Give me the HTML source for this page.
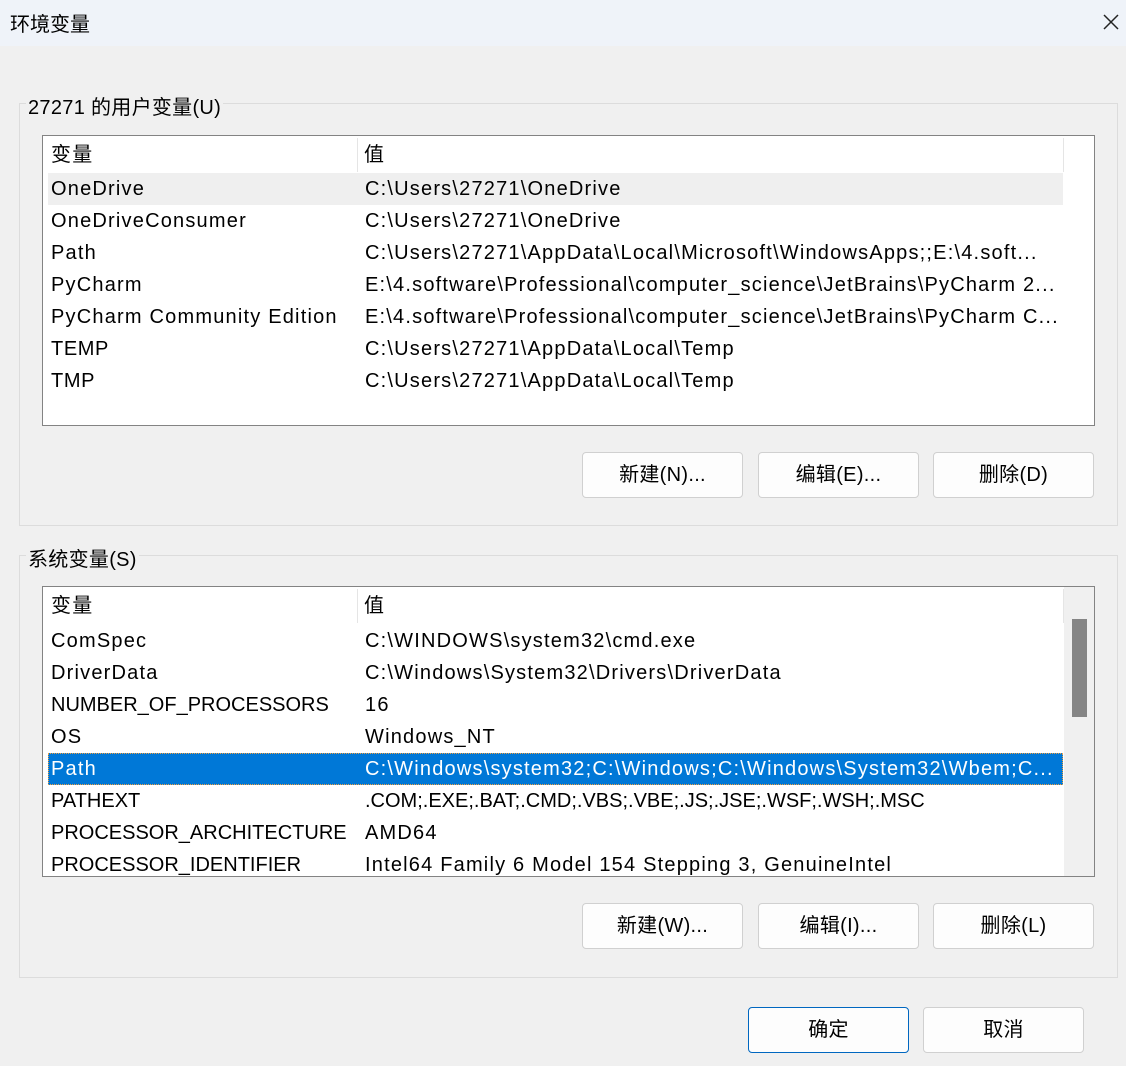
<!DOCTYPE html>
<html><head><meta charset="utf-8"><style>
*{margin:0;padding:0;box-sizing:border-box}
body{width:1126px;height:1066px;background:#f0f0f0;position:relative;overflow:hidden;font-family:"Liberation Sans","Noto Sans CJK SC",sans-serif;font-size:20px;color:#000;letter-spacing:1.2px}
.abs{position:absolute}
.title{left:0;top:0;width:1126px;height:46px;background:#eff3f9}
.title span{position:absolute;left:10px;top:8px;font-size:20px;letter-spacing:0}
.group{border:1px solid #dcdcdc}
.legend{background:#f0f0f0;padding:0 2px;white-space:nowrap}
.list{background:#fff;border:1px solid #838383;overflow:hidden}
.row{position:absolute;left:8px;height:32px;line-height:33px;white-space:nowrap}
.row .k{position:absolute;left:0}
.row .v{position:absolute;left:314px;width:700px;overflow:hidden}
.u{letter-spacing:0}
.btn{background:#fdfdfd;border:1px solid #d0d0d0;border-radius:4px;text-align:center;line-height:44px;height:46px;width:161px;letter-spacing:0.3px}
</style></head><body>
<div class="abs title"><span>环境变量</span>
<svg class="abs" style="left:1102px;top:13px" width="18" height="18" viewBox="0 0 18 18"><path d="M2 2L16 16M16 2L2 16" stroke="#222" stroke-width="1.5"/></svg></div>

<div class="abs group" style="left:19px;top:103px;width:1099px;height:423px"></div>
<div class="abs legend" style="left:26px;top:91px;letter-spacing:0.3px">27271 的用户变量(U)</div>
<div class="abs list" style="left:42px;top:135px;width:1053px;height:291px">
 <div class="abs" style="left:314px;top:2px;width:1px;height:34px;background:#e5e5e5"></div>
 <div class="abs" style="left:1020px;top:2px;width:1px;height:34px;background:#e5e5e5"></div>
 <div class="row" style="top:3px"><span class="k">变量</span><span class="v" style="left:313px">值</span></div>
 <div class="abs" style="left:5px;top:37px;width:1015px;height:32px;background:#efefef"></div>
 <div class="row" style="top:37px"><span class="k">OneDrive</span><span class="v">C:\Users\27271\OneDrive</span></div>
 <div class="row" style="top:69px"><span class="k">OneDriveConsumer</span><span class="v">C:\Users\27271\OneDrive</span></div>
 <div class="row" style="top:101px"><span class="k">Path</span><span class="v">C:\Users\27271\AppData\Local\Microsoft\WindowsApps;;E:\4.soft...</span></div>
 <div class="row" style="top:133px"><span class="k">PyCharm</span><span class="v">E:\4.software\Professional\computer_science\JetBrains\PyCharm 2...</span></div>
 <div class="row" style="top:165px"><span class="k">PyCharm Community Edition</span><span class="v">E:\4.software\Professional\computer_science\JetBrains\PyCharm C...</span></div>
 <div class="row" style="top:197px"><span class="k u" style="letter-spacing:0.6px">TEMP</span><span class="v">C:\Users\27271\AppData\Local\Temp</span></div>
 <div class="row" style="top:229px"><span class="k u" style="letter-spacing:0.6px">TMP</span><span class="v">C:\Users\27271\AppData\Local\Temp</span></div>
</div>
<div class="abs btn" style="left:582px;top:452px">新建(N)...</div>
<div class="abs btn" style="left:758px;top:452px">编辑(E)...</div>
<div class="abs btn" style="left:933px;top:452px">删除(D)</div>

<div class="abs group" style="left:19px;top:555px;width:1099px;height:423px"></div>
<div class="abs legend" style="left:26px;top:543px;letter-spacing:0.3px">系统变量(S)</div>
<div class="abs list" style="left:42px;top:586px;width:1053px;height:291px">
 <div class="abs" style="left:314px;top:2px;width:1px;height:34px;background:#e5e5e5"></div>
 <div class="abs" style="left:1020px;top:2px;width:1px;height:34px;background:#e5e5e5"></div>
 <div class="abs" style="left:1021px;top:0;width:31px;height:291px;background:#f0f0f0"></div>
 <div class="abs" style="left:1029px;top:32px;width:15px;height:98px;background:#858585"></div>
 <div class="row" style="top:3px"><span class="k">变量</span><span class="v" style="left:313px">值</span></div>
 <div class="row" style="top:38px"><span class="k">ComSpec</span><span class="v">C:\WINDOWS\system32\cmd.exe</span></div>
 <div class="row" style="top:70px"><span class="k">DriverData</span><span class="v">C:\Windows\System32\Drivers\DriverData</span></div>
 <div class="row" style="top:102px"><span class="k u">NUMBER_OF_PROCESSORS</span><span class="v">16</span></div>
 <div class="row" style="top:134px"><span class="k">OS</span><span class="v">Windows_NT</span></div>
 <div class="abs" style="left:5px;top:166px;width:1015px;height:32px;background:#0078d7;border:1px dotted #f0a040"></div>
 <div class="row" style="top:166px;color:#fff"><span class="k">Path</span><span class="v">C:\Windows\system32;C:\Windows;C:\Windows\System32\Wbem;C...</span></div>
 <div class="row" style="top:198px"><span class="k u">PATHEXT</span><span class="v u">.COM;.EXE;.BAT;.CMD;.VBS;.VBE;.JS;.JSE;.WSF;.WSH;.MSC</span></div>
 <div class="row" style="top:230px"><span class="k u">PROCESSOR_ARCHITECTURE</span><span class="v">AMD64</span></div>
 <div class="row" style="top:262px"><span class="k u">PROCESSOR_IDENTIFIER</span><span class="v">Intel64 Family 6 Model 154 Stepping 3, GenuineIntel</span></div>
</div>
<div class="abs btn" style="left:582px;top:903px">新建(W)...</div>
<div class="abs btn" style="left:758px;top:903px">编辑(I)...</div>
<div class="abs btn" style="left:933px;top:903px">删除(L)</div>

<div class="abs btn" style="left:748px;top:1007px;border-color:#0067c0">确定</div>
<div class="abs btn" style="left:923px;top:1007px">取消</div>
</body></html>
